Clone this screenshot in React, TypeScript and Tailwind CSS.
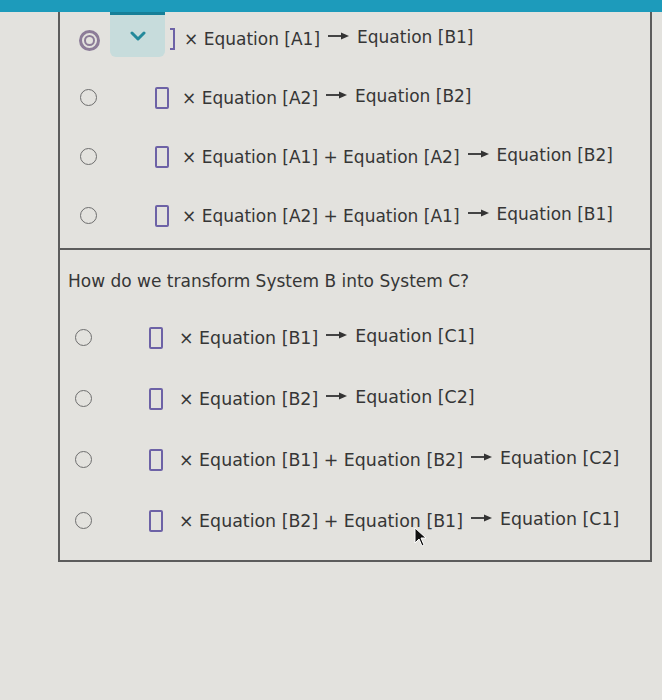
import React from "react";

const font = { fontFamily: '"DejaVu Sans", Verdana, sans-serif' };

function Arrow() {
  return (
    <svg width="22" height="10" viewBox="0 0 22 10" className="ml-[8px] mr-[7px] -translate-y-[3px]">
      <line x1="0" y1="5" x2="14" y2="5" stroke="#333" strokeWidth="1.8" />
      <polygon points="13,1.5 21,5 13,8.5" fill="#333" />
    </svg>
  );
}

function Expr({ parts, big }: { parts: string[]; big?: boolean }) {
  return (
    <div
      className={
        "flex items-center text-[#363636] whitespace-nowrap leading-[20px] " + (big ? "text-[17.4px]" : "text-[17px]")
      }
      style={font}
    >
      <span>× {parts[0]}</span>
      <Arrow />
      <span className="-translate-y-[2px]">{parts[1]}</span>
    </div>
  );
}

function Radio() {
  return <div className="w-[17px] h-[17px] rounded-full border-[1.5px] border-[#6e6e6e] shrink-0" />;
}

function InBox() {
  return <div className="w-[14px] h-[22px] border-2 border-[#6d62a6] rounded-[2px] shrink-0" />;
}

export default function App() {
  const rowsA: string[][] = [
    ["Equation [A2]", "Equation [B2]"],
    ["Equation [A1] + Equation [A2]", "Equation [B2]"],
    ["Equation [A2] + Equation [A1]", "Equation [B1]"],
  ];
  const rowsB: string[][] = [
    ["Equation [B1]", "Equation [C1]"],
    ["Equation [B2]", "Equation [C2]"],
    ["Equation [B1] + Equation [B2]", "Equation [C2]"],
    ["Equation [B2] + Equation [B1]", "Equation [C1]"],
  ];
  return (
    <div className="w-[662px] h-[700px] bg-[#e3e2de] relative overflow-hidden" style={font}>
      <div className="h-[12px] bg-[#1d9bbb]" />
      <div className="ml-[58px] w-[594px]">
        {/* Box 1 */}
        <div className="border-l-2 border-r-2 border-[#5c5c5c]">
          <div className="h-[56px] flex items-start">
            <div className="ml-[19px] mt-[18px] w-[21px] h-[21px] rounded-full border-[3px] border-[#8c7c98] flex items-center justify-center shrink-0">
              <div className="w-[11px] h-[11px] rounded-full border-[2px] border-[#8c7c98]" />
            </div>
            <div className="ml-[10px] w-[55px] h-[45px] bg-[#c7dcdc] rounded-b-[6px] border-t-[3px] border-[#167f98] flex items-center justify-center shrink-0">
              <svg width="16" height="10" viewBox="0 0 16 10">
                <polyline points="2,2 8,8 14,2" fill="none" stroke="#23899b" strokeWidth="3" strokeLinecap="round" strokeLinejoin="round" />
              </svg>
            </div>
            <div className="ml-[5px] mt-[16px] w-[5px] h-[22px] border-t-2 border-r-2 border-b-2 border-[#6d62a6] shrink-0" />
            <div className="ml-[9px] mt-[17px]">
              <Expr parts={["Equation [A1]", "Equation [B1]"]} />
            </div>
          </div>
          {rowsA.map((r, i) => (
            <div key={i} className="h-[59px] flex items-center">
              <div className="ml-[20px]">
                <Radio />
              </div>
              <div className="ml-[58px]">
                <InBox />
              </div>
              <div className="ml-[13px]">
                <Expr parts={r} />
              </div>
            </div>
          ))}
          <div className="h-[3px]" />
        </div>
        {/* Box 2 */}
        <div className="border-2 border-[#5c5c5c]">
          <div className="pt-[21px] pl-[8px] text-[17px] leading-[20px] text-[#363636]">
            How do we transform System B into System C?
          </div>
          <div className="h-[16px]" />
          {rowsB.map((r, i) => (
            <div key={i} className="h-[61px] flex items-center">
              <div className="ml-[15px]">
                <Radio />
              </div>
              <div className="ml-[57px]">
                <InBox />
              </div>
              <div className="ml-[16px]">
                <Expr parts={r} big />
              </div>
            </div>
          ))}
          <div className="h-[9px]" />
        </div>
      </div>
      {/* mouse cursor */}
      <svg className="absolute left-[414px] top-[527px]" width="14" height="22" viewBox="0 0 14 22">
        <polygon points="1,1 1,16 5,12 8,19 10,18 7,11 12,11" fill="#111" stroke="#fff" strokeWidth="1" />
      </svg>
    </div>
  );
}
